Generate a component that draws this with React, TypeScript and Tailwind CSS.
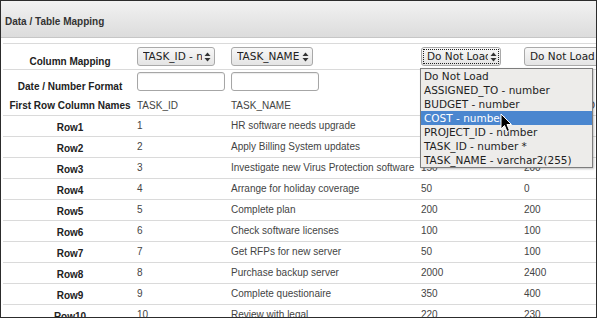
import React from "react";

const rows: [string, string, string, string][] = [
  ["1", "HR software needs upgrade", "100", "120"],
  ["2", "Apply Billing System updates", "80", "90"],
  ["3", "Investigate new Virus Protection software", "150", "200"],
  ["4", "Arrange for holiday coverage", "50", "0"],
  ["5", "Complete plan", "200", "200"],
  ["6", "Check software licenses", "100", "100"],
  ["7", "Get RFPs for new server", "50", "100"],
  ["8", "Purchase backup server", "2000", "2400"],
  ["9", "Complete questionaire", "350", "400"],
  ["10", "Review with legal", "220", "230"],
];

const options = [
  "Do Not Load",
  "ASSIGNED_TO - number",
  "BUDGET - number",
  "COST - number",
  "PROJECT_ID - number",
  "TASK_ID - number *",
  "TASK_NAME - varchar2(255)",
];

function Arrows() {
  return (
    <svg width="7" height="10" viewBox="0 0 7 10" className="shrink-0">
      <path d="M3.5 0.5 L6.5 4 L0.5 4 Z" fill="#333" />
      <path d="M3.5 9.5 L6.5 6 L0.5 6 Z" fill="#333" />
    </svg>
  );
}

function Select({ text, width, focused }: { text: string; width: string; focused?: boolean }) {
  return (
    <div
      className={`relative ${width} h-[19px] shrink-0 rounded-[3px] border border-[#a9a9a9] bg-gradient-to-b from-[#f8f8f8] to-[#e4e4e4] flex items-center pl-[5px] pr-[3px] font-['DejaVu_Sans',sans-serif] text-[10.5px] text-[#222]`}
    >
      <div className="flex-1 overflow-hidden whitespace-nowrap leading-[17px]">{text}</div>
      <div className="w-[8px] ml-[1px] flex justify-center shrink-0">
        <Arrows />
      </div>
      {focused && <div className="absolute inset-[1px] border border-dotted border-[#222]" />}
    </div>
  );
}

function Input({ width }: { width: string }) {
  return (
    <div className={`${width} h-[19px] shrink-0 rounded-[3px] border border-[#a6a6a6] bg-white shadow-[inset_0_1px_1px_rgba(0,0,0,0.08)]`} />
  );
}

export default function App() {
  return (
    <div className="w-[600px] h-[318px] bg-white overflow-hidden">
      <div className="relative w-[597px] h-[318px] border border-[#2c2c2c] overflow-hidden font-['Liberation_Sans',Arial,sans-serif]">
        {/* Header */}
        <div className="h-[37px] bg-gradient-to-b from-[#f2f2f2] to-[#dcdcdc] border-b border-[#c6c6c6] flex items-center pl-[4px] pt-[4px] text-[10px] font-bold text-[#333]">
          Data / Table Mapping
        </div>

        <div className="mt-[5px] ml-[2px] border-t border-[#dadada]">
          {/* Column Mapping row */}
          <div className="flex h-[26px] border-b border-[#dadada]">
            <div className="w-[131px] shrink-0 pl-[3px] flex items-end justify-center pb-[1px] text-[10px] leading-[12px] font-bold text-[#222]">
              Column Mapping
            </div>
            <div className="w-[94px] shrink-0 pl-[3px] pt-[3px]">
              <Select text="TASK_ID - number" width="w-[78px]" />
            </div>
            <div className="w-[190px] shrink-0 pl-[3px] pt-[3px]">
              <Select text="TASK_NAME - varchar2(255)" width="w-[82px]" />
            </div>
            <div className="w-[103px] shrink-0 pl-[3px] pt-[3px]">
              <Select text="Do Not Load" width="w-[80px]" focused />
            </div>
            <div className="w-[100px] shrink-0 pl-[3px] pt-[3px]">
              <Select text="Do Not Load" width="w-[90px]" />
            </div>
          </div>

          {/* Date / Number Format row */}
          <div className="flex h-[25px]">
            <div className="w-[131px] shrink-0 pl-[3px] flex items-end justify-center pb-[2px] text-[10px] leading-[12px] font-bold text-[#222]">
              Date / Number Format
            </div>
            <div className="w-[94px] shrink-0 pl-[3px] pt-[2px]">
              <Input width="w-[88px]" />
            </div>
            <div className="w-[190px] shrink-0 pl-[3px] pt-[2px]">
              <Input width="w-[88px]" />
            </div>
          </div>

          {/* First row column names */}
          <div className="flex h-[21px] pt-[2px] border-b border-[#dadada] items-center text-[10px] leading-[12px]">
            <div className="w-[131px] shrink-0 pl-[3px] text-center font-bold text-[#222] whitespace-nowrap">
              First Row Column Names
            </div>
            <div className="w-[94px] shrink-0 pl-[3px] text-[#444]">TASK_ID</div>
            <div className="w-[190px] shrink-0 pl-[3px] text-[#444]">TASK_NAME</div>
            <div className="w-[103px] shrink-0 pl-[3px] text-[#444]">COST</div>
            <div className="w-[100px] shrink-0 pl-[3px] text-[#444] whitespace-nowrap">ASSIGNED_TO</div>
          </div>

          {rows.map((r, i) => (
            <div key={i} className="flex h-[21px] border-b border-[#dadada] text-[10px] leading-[12px]">
              <div className="w-[131px] shrink-0 pl-[3px] flex items-end justify-center pb-[2px] font-bold text-[#222]">
                Row{i + 1}
              </div>
              <div className="w-[94px] shrink-0 pl-[3px] flex items-center text-[#444]">{r[0]}</div>
              <div className="w-[190px] shrink-0 pl-[3px] flex items-center text-[#444] whitespace-nowrap">{r[1]}</div>
              <div className="w-[103px] shrink-0 pl-[3px] flex items-center text-[#444]">{r[2]}</div>
              <div className="w-[100px] shrink-0 pl-[3px] flex items-center text-[#444]">{r[3]}</div>
            </div>
          ))}
        </div>

        {/* Dropdown list */}
        <div className="absolute left-[419px] top-[67px] w-[173px] border border-[#7d7d7d] bg-[#edecea] shadow-[1px_1px_2px_rgba(0,0,0,0.25)] font-['DejaVu_Sans',sans-serif] text-[10.5px]">
          {options.map((o, i) => (
            <div
              key={o}
              className={`h-[14px] leading-[14px] pl-[3px] whitespace-nowrap ${
                i === 3 ? "bg-[#4a86cf] text-white" : "text-[#1e1e1e]"
              }`}
            >
              {o}
            </div>
          ))}
        </div>

        {/* Mouse cursor */}
        <svg
          className="absolute left-[499px] top-[112px]"
          width="13"
          height="20"
          viewBox="0 0 13 20"
        >
          <path
            d="M1 1 L1 16 L4.5 12.5 L7 18.5 L9.5 17.5 L7 11.5 L11.5 11.5 Z"
            fill="#000"
            stroke="#fff"
            strokeWidth="1"
            strokeLinejoin="round"
          />
        </svg>
      </div>
    </div>
  );
}
